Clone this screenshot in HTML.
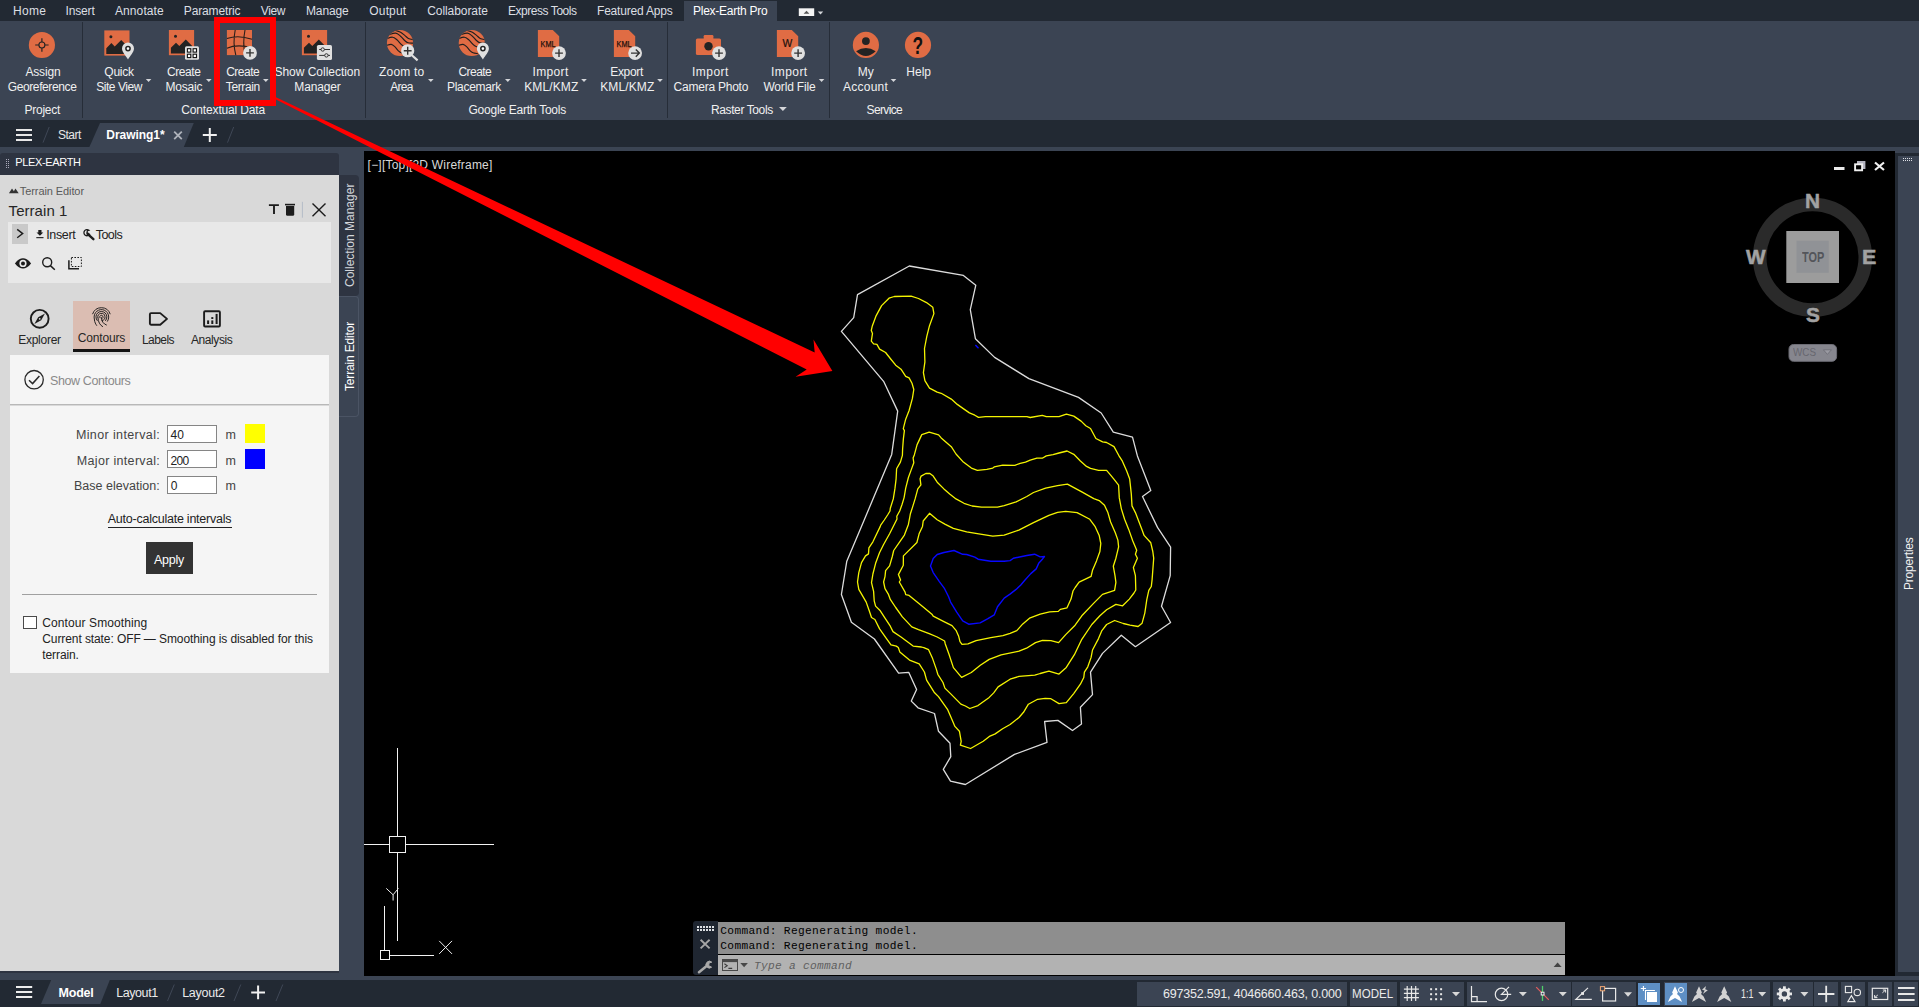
<!DOCTYPE html>
<html lang="en"><head><meta charset="utf-8"><title>Plex-Earth Terrain Editor - Drawing1</title>
<style>
*{box-sizing:border-box;margin:0;padding:0}
html,body{width:1919px;height:1007px;overflow:hidden;background:#3b4453;font-family:'Liberation Sans', sans-serif;}
.a{position:absolute}
.t{position:absolute;white-space:pre;line-height:20px;height:20px;font-family:'Liberation Sans', sans-serif;}
svg{position:absolute;overflow:visible}
#menubar{left:0;top:0;width:1919px;height:21px;background:#222933}
#acttab{left:684px;top:1px;width:93px;height:20px;background:#3b4453}
#ribbon{left:1px;top:21px;width:1918px;height:99px;background:#3b4453}
.rsep{position:absolute;top:22px;width:1px;height:96px;background:#262d38}
#ftabs{left:0;top:120px;width:1919px;height:27px;background:#222933}
#paltitle{left:0;top:153px;width:339px;height:22px;background:#2e3441;border-radius:3px 3px 0 0}
#palette{left:0;top:174.5px;width:339px;height:796.5px;background:#d9d9d9}
#viewport{left:364px;top:151px;width:1531px;height:825px;background:#000}
#statusbar{left:0;top:980px;width:1919px;height:27px;background:#222933}
.sbb{position:absolute;top:982px;height:24px;background:#3b4453}
</style></head><body>
<div id="menubar" class="a"></div><div id="acttab" class="a"></div>
<div id="ribbon" class="a"></div>
<div class="rsep" style="left:82px"></div><div class="rsep" style="left:365px"></div><div class="rsep" style="left:667px"></div><div class="rsep" style="left:829px"></div>
<div id="ftabs" class="a"></div>
<div id="paltitle" class="a"></div>
<div id="palette" class="a"></div>
<div id="viewport" class="a"></div>
<div id="statusbar" class="a"></div>

<svg id="ribbon-icons" class="a" style="left:0;top:0" width="1919" height="120" viewBox="0 0 1919 120"><circle cx="41.9" cy="45" r="13.1" fill="#e06c44"/><circle cx="41.9" cy="45" r="3" fill="none" stroke="#232323" stroke-width="1.1"/><path d="M35.2 45 H38.9 M44.9 45 H48.6 M41.9 38.3 V42 M41.9 48 V51.7" stroke="#232323" stroke-width="1.2"/><rect x="104.3" y="30.4" width="25.2" height="25.2" fill="#e06c44"/><circle cx="110.89999999999999" cy="36.699999999999996" r="1.5" fill="#232323"/><path d="M106.3 54.0 V48.2 L111.39999999999999 43.099999999999994 L114.7 46.4 L121.19999999999999 40.0 L127.6 46.4 V54.0 Z" fill="#232323"/><path d="M128 59.5 C125.8 55.800000000000004 122 52.2 122 48.6 A6 6 0 1 1 134 48.6 C134 52.2 130.2 55.800000000000004 128 59.5 Z" fill="#e0e0e0"/><circle cx="128" cy="48.6" r="2.1" fill="#fff" stroke="#232323" stroke-width="1.5"/><rect x="168.9" y="30" width="25.2" height="25.2" fill="#e06c44"/><circle cx="175.5" cy="36.3" r="1.5" fill="#232323"/><path d="M170.9 53.6 V47.8 L176.0 42.7 L179.3 46 L185.8 39.6 L192.20000000000002 46 V53.6 Z" fill="#232323"/><rect x="185" y="46.2" width="14" height="13.6" rx="1.5" fill="#e0e0e0"/><rect x="187.4" y="48.699999999999996" width="3.4" height="3.4" fill="#fff" stroke="#111" stroke-width="1.1"/><rect x="193.10000000000002" y="48.699999999999996" width="3.4" height="3.4" fill="#fff" stroke="#111" stroke-width="1.1"/><rect x="187.4" y="54.199999999999996" width="3.4" height="3.4" fill="#fff" stroke="#111" stroke-width="1.1"/><rect x="193.10000000000002" y="54.199999999999996" width="3.4" height="3.4" fill="#fff" stroke="#111" stroke-width="1.1"/><rect x="226.9" y="30" width="25.1" height="25.1" fill="#e06c44"/><path d="M235.2 30 C233.6 38 233.4 46 235.8 55.1 M245 30 C243.4 38 243.2 46 245 55.1 M226.9 38.6 C234 36 244 36.5 252 39.3 M226.9 48.2 C234 45.2 244 45.6 252 47.8" stroke="#2a1f1b" stroke-width="1.1" fill="none"/><circle cx="250" cy="52.9" r="6.9" fill="#e0e0e0"/><path d="M246.1 52.9 H253.9 M250 49.0 V56.8" stroke="#333" stroke-width="1.4" fill="none"/><rect x="301.9" y="30" width="25.2" height="25.2" fill="#e06c44"/><circle cx="308.5" cy="36.3" r="1.5" fill="#232323"/><path d="M303.9 53.6 V47.8 L309.0 42.7 L312.29999999999995 46 L318.79999999999995 39.6 L325.2 46 V53.6 Z" fill="#232323"/><rect x="316.9" y="45" width="15.1" height="15" rx="1.6" fill="#e0e0e0"/><path d="M319.2 49.5 H330 M319.2 55.4 H330" stroke="#333" stroke-width="1"/><circle cx="322.7" cy="49.5" r="1.7" fill="#e0e0e0" stroke="#333" stroke-width="1"/><circle cx="326.4" cy="55.4" r="1.7" fill="#e0e0e0" stroke="#333" stroke-width="1"/><clipPath id="g1"><circle cx="400" cy="43" r="13.1"/></clipPath><circle cx="400" cy="43" r="13.1" fill="#e06c44"/><g clip-path="url(#g1)"><path d="M394.00 30.00 C395.10 30.37 398.77 31.27 400.60 32.20 C402.43 33.13 403.70 34.57 405.00 35.60 C406.30 36.63 406.98 37.72 408.40 38.40 C409.82 39.08 412.65 39.48 413.50 39.70" stroke="#1f1f1f" stroke-width="1.15" fill="none"/><path d="M388.00 35.00 C389.27 34.68 393.50 32.89 395.60 33.10 C397.70 33.31 399.13 35.05 400.60 36.25 C402.07 37.45 403.15 39.21 404.40 40.30 C405.65 41.39 406.50 42.33 408.10 42.80 C409.70 43.27 413.02 43.05 414.00 43.10" stroke="#1f1f1f" stroke-width="1.15" fill="none"/><path d="M386.00 39.00 C387.08 38.70 390.68 37.08 392.50 37.20 C394.32 37.32 395.55 38.61 396.90 39.70 C398.25 40.79 399.46 42.66 400.60 43.75 C401.74 44.84 402.52 45.67 403.75 46.25 C404.98 46.83 406.46 47.14 408.00 47.20 C409.54 47.26 412.17 46.70 413.00 46.60" stroke="#1f1f1f" stroke-width="1.15" fill="none"/><path d="M386.00 45.60 C386.88 45.40 389.75 44.18 391.25 44.40 C392.75 44.62 393.86 45.87 395.00 46.90 C396.14 47.93 397.06 49.62 398.10 50.60 C399.14 51.58 399.93 52.30 401.25 52.80 C402.57 53.30 405.21 53.47 406.00 53.60" stroke="#1f1f1f" stroke-width="1.15" fill="none"/></g><path d="M411.6 55 L417.6 60.4" stroke="#e0e0e0" stroke-width="2.2"/><circle cx="407.7" cy="50.75" r="6.6" fill="#e0e0e0"/><path d="M403.8 50.75 H411.59999999999997 M407.7 46.85 V54.65" stroke="#333" stroke-width="1.4" fill="none"/><clipPath id="g2"><circle cx="471.8" cy="43" r="13.1"/></clipPath><circle cx="471.8" cy="43" r="13.1" fill="#e06c44"/><g clip-path="url(#g2)"><path d="M465.80 30.00 C466.90 30.37 470.57 31.27 472.40 32.20 C474.23 33.13 475.50 34.57 476.80 35.60 C478.10 36.63 478.78 37.72 480.20 38.40 C481.62 39.08 484.45 39.48 485.30 39.70" stroke="#1f1f1f" stroke-width="1.15" fill="none"/><path d="M459.80 35.00 C461.07 34.68 465.30 32.89 467.40 33.10 C469.50 33.31 470.93 35.05 472.40 36.25 C473.87 37.45 474.95 39.21 476.20 40.30 C477.45 41.39 478.30 42.33 479.90 42.80 C481.50 43.27 484.82 43.05 485.80 43.10" stroke="#1f1f1f" stroke-width="1.15" fill="none"/><path d="M457.80 39.00 C458.88 38.70 462.48 37.08 464.30 37.20 C466.12 37.32 467.35 38.61 468.70 39.70 C470.05 40.79 471.26 42.66 472.40 43.75 C473.54 44.84 474.32 45.67 475.55 46.25 C476.78 46.83 478.26 47.14 479.80 47.20 C481.34 47.26 483.97 46.70 484.80 46.60" stroke="#1f1f1f" stroke-width="1.15" fill="none"/><path d="M457.80 45.60 C458.68 45.40 461.55 44.18 463.05 44.40 C464.55 44.62 465.66 45.87 466.80 46.90 C467.94 47.93 468.86 49.62 469.90 50.60 C470.94 51.58 471.73 52.30 473.05 52.80 C474.37 53.30 477.01 53.47 477.80 53.60" stroke="#1f1f1f" stroke-width="1.15" fill="none"/></g><path d="M482.9 59.5 C480.7 55.800000000000004 476.9 52.2 476.9 48.6 A6 6 0 1 1 488.9 48.6 C488.9 52.2 485.09999999999997 55.800000000000004 482.9 59.5 Z" fill="#e0e0e0"/><circle cx="482.9" cy="48.6" r="2.1" fill="#fff" stroke="#232323" stroke-width="1.5"/><path d="M537.9 30 H552.8 L559.1999999999999 36.3 V57.1 H537.9 Z" fill="#e06c44"/><circle cx="559" cy="53.1" r="6.9" fill="#e0e0e0"/><path d="M555.1 53.1 H562.9 M559 49.2 V57.0" stroke="#333" stroke-width="1.4" fill="none"/><path d="M613.9 30 H628.8 L635.1999999999999 36.3 V57.1 H613.9 Z" fill="#e06c44"/><circle cx="635.1" cy="53.1" r="6.9" fill="#e0e0e0"/><path d="M631 53.1 H639.2 M635.8 49.4 L639.4 53.1 L635.8 56.8" stroke="#333" stroke-width="1.4" fill="none"/><rect x="695.9" y="38.5" width="25.1" height="16.6" rx="1.6" fill="#e06c44"/><path d="M703.7 39 V36.2 Q703.7 35 704.9 35 H712.2 Q713.4 35 713.4 36.2 V39 Z" fill="#e06c44"/><circle cx="708.5" cy="46.2" r="4.2" fill="#232323"/><circle cx="719" cy="53.1" r="6.9" fill="#e0e0e0"/><path d="M715.1 53.1 H722.9 M719 49.2 V57.0" stroke="#333" stroke-width="1.4" fill="none"/><path d="M776.9 30 H791.8 L798.1999999999999 36.3 V57.1 H776.9 Z" fill="#e06c44"/><circle cx="798.1" cy="53.1" r="6.9" fill="#e0e0e0"/><path d="M794.2 53.1 H802.0 M798.1 49.2 V57.0" stroke="#333" stroke-width="1.4" fill="none"/><circle cx="865.9" cy="44.9" r="13.1" fill="#e06c44"/><circle cx="865.9" cy="41.1" r="3.9" fill="#232323"/><path d="M856.1 51.3 Q865.9 44.8 875.7 51.3 Q865.9 60.8 856.1 51.3 Z" fill="#232323"/><circle cx="918" cy="44.9" r="13.1" fill="#e06c44"/><path d="M145.8 79 h5.6 l-2.8 3 z" fill="#d4d6da"/><path d="M206 79 h5.6 l-2.8 3 z" fill="#d4d6da"/><path d="M263 79 h5.6 l-2.8 3 z" fill="#d4d6da"/><path d="M428 79 h5.6 l-2.8 3 z" fill="#d4d6da"/><path d="M505 79 h5.6 l-2.8 3 z" fill="#d4d6da"/><path d="M581.2 79 h5.6 l-2.8 3 z" fill="#d4d6da"/><path d="M657.2 79 h5.6 l-2.8 3 z" fill="#d4d6da"/><path d="M818.8 79 h5.6 l-2.8 3 z" fill="#d4d6da"/><path d="M890.7 79 h5.6 l-2.8 3 z" fill="#d4d6da"/><path d="M779 107 h7.8 l-3.9 4 z" fill="#d4d6da"/><rect x="798.8" y="8.3" width="15.4" height="7.7" fill="#f4f4f4"/><path d="M803.6 13.8 l2.9 -3 l2.9 3 z" fill="#555"/><path d="M817.8 11.4 h5.4 l-2.7 3 z" fill="#d4d6da"/><text x="540.6" y="46.8" font-family="Liberation Sans, sans-serif" font-size="8.4" fill="#1c100c" stroke="#1c100c" stroke-width="0.25" textLength="15" lengthAdjust="spacingAndGlyphs">KML</text><text x="616.6" y="46.8" font-family="Liberation Sans, sans-serif" font-size="8.4" fill="#1c100c" stroke="#1c100c" stroke-width="0.25" textLength="15" lengthAdjust="spacingAndGlyphs">KML</text><text x="782.6" y="46.9" font-family="Liberation Sans, sans-serif" font-size="10.4" fill="#1c100c" stroke="#1c100c" stroke-width="0.2" textLength="9.8" lengthAdjust="spacingAndGlyphs">W</text><text x="912.6" y="54" font-family="Liberation Sans, sans-serif" font-size="24.4" font-weight="700" fill="#111" textLength="10.6" lengthAdjust="spacingAndGlyphs">?</text></svg>
<svg id="filetab-icons" class="a" style="left:0;top:0" width="400" height="150" viewBox="0 0 400 150"><path d="M89.4 147 L100 123 H193.8 L183.8 147 Z" fill="#3b4453"/><path d="M16 130 H32 M16 135 H32 M16 140 H32" stroke="#e8e8e8" stroke-width="2"/><path d="M43 142.6 L49.2 127" stroke="#3f4756" stroke-width="1"/><path d="M227.5 142.6 L233.7 127" stroke="#3f4756" stroke-width="1"/><path d="M174.2 131.6 L181.8 139.2 M181.8 131.6 L174.2 139.2" stroke="#aeb2ba" stroke-width="1.8"/><path d="M202.8 135 H216.8 M209.8 128 V142" stroke="#f0f0f0" stroke-width="2"/></svg>

<div class="a" id="toolbar-panel" style="left:8px;top:222px;width:323px;height:61px;background:#e8e8e8"></div>
<div class="a" id="chev-btn" style="left:12px;top:224px;width:16px;height:19.5px;background:#c9c9c9"></div>
<div class="a" id="tab-contours" style="left:73.2px;top:301px;width:56.5px;height:51.4px;background:#dbbdb2;border-bottom:3.5px solid #141414"></div>
<div class="a" id="card-show" style="left:10px;top:355px;width:319px;height:49.5px;background:#f5f5f5;border-bottom:1px solid #b8b8b8"></div>
<div class="a" id="card-settings" style="left:10px;top:405.5px;width:319px;height:267.5px;background:#f5f5f5"></div>
<div class="a inp" style="left:167px;top:425.3px;width:50px;height:17.4px;background:#fff;border:1px solid #858585"></div>
<div class="a inp" style="left:167px;top:450.4px;width:50px;height:17.4px;background:#fff;border:1px solid #858585"></div>
<div class="a inp" style="left:167px;top:476.3px;width:50px;height:17.4px;background:#fff;border:1px solid #858585"></div>
<div class="a" id="sw-minor" style="left:244.8px;top:423.6px;width:20.2px;height:19.6px;background:#ffff00"></div>
<div class="a" id="sw-major" style="left:244.8px;top:449.2px;width:20.2px;height:19.8px;background:#0000ff"></div>
<div class="a" id="auto-ul" style="left:107.5px;top:527px;width:124px;height:1px;background:#222"></div>
<div class="a" id="apply-btn" style="left:146px;top:542px;width:47px;height:31.8px;background:#333333"></div>
<div class="a" id="hr1" style="left:22px;top:594px;width:295px;height:1px;background:#a0a0a0"></div>
<div class="a" id="cb-smooth" style="left:23px;top:616.4px;width:14px;height:12.8px;background:#fff;border:1px solid #4a4a4a"></div>
<div class="a" id="side-cm" style="left:339px;top:175px;width:19.6px;height:121px;background:#2e3441;border-radius:0 4px 4px 0"></div>
<div class="a" id="side-te" style="left:339px;top:296px;width:19.6px;height:121px;background:#3b4453;border:1px solid #4b5464;border-left:none;border-radius:0 4px 4px 0"></div>
<div class="a" style="left:339px;top:153px;width:25px;height:22px;background:#3b4453"></div>

<svg id="palette-icons" class="a" style="left:0;top:0" width="364" height="700" viewBox="0 0 364 700"><rect x="6" y="159" width="1" height="1" fill="#aab"/><rect x="8" y="159" width="1" height="1" fill="#aab"/><rect x="6" y="161" width="1" height="1" fill="#aab"/><rect x="8" y="161" width="1" height="1" fill="#aab"/><rect x="6" y="163" width="1" height="1" fill="#aab"/><rect x="8" y="163" width="1" height="1" fill="#aab"/><rect x="6" y="165" width="1" height="1" fill="#aab"/><rect x="8" y="165" width="1" height="1" fill="#aab"/><rect x="6" y="167" width="1" height="1" fill="#aab"/><rect x="8" y="167" width="1" height="1" fill="#aab"/><path d="M8.9 193.2 L12 188.6 L13.9 191.2 L15.4 188.6 L18.7 193.2 Z" fill="#333"/><path d="M268.9 205.1 H278.9 M274 205 V213.9" stroke="#1c1c1c" stroke-width="1.9" fill="none"/><rect x="285" y="203.8" width="10" height="1.6" fill="#1c1c1c"/><path d="M286 206 H294.2 V214.4 Q294.2 215.8 292.8 215.8 H287.4 Q286 215.8 286 214.4 Z" fill="#1c1c1c"/><path d="M302.4 201.8 V217.7" stroke="#b5bcc8" stroke-width="1"/><path d="M312.5 203.4 L325.5 216.2 M325.5 203.4 L312.5 216.2" stroke="#1c1c1c" stroke-width="1.4"/><path d="M17.2 229.4 L22.7 233.6 L17.2 237.8" stroke="#1c1c1c" stroke-width="1.4" fill="none"/><path d="M38.3 230.1 H41.5 V232.6 H43.3 L39.9 235.8 L36.5 232.6 H38.3 Z" fill="#1c1c1c"/><rect x="36.3" y="237.1" width="7.2" height="1.1" fill="#1c1c1c"/><path d="M87.5 233.8 L93.4 239.2" stroke="#1c1c1c" stroke-width="2.4" stroke-linecap="round"/><path d="M88.9 230.2 A3.1 3.1 0 1 0 89.6 234.4 L87 232.6 L87.4 230.6 Z" fill="none" stroke="#1c1c1c" stroke-width="1.3"/><path d="M14.9 263.4 Q23 253.2 31.1 263.4 Q23 273.6 14.9 263.4 Z" fill="#1c1c1c"/><circle cx="23" cy="263.4" r="3.6" fill="#e8e8e8"/><circle cx="23" cy="263.4" r="2" fill="#1c1c1c"/><circle cx="47.2" cy="262.3" r="4.5" fill="none" stroke="#1c1c1c" stroke-width="1.4"/><path d="M50.4 265.6 L54.8 269.7" stroke="#1c1c1c" stroke-width="1.5"/><path d="M68.9 260.2 V268.8 H79" stroke="#1c1c1c" stroke-width="1.5" fill="none"/><rect x="71.4" y="257.5" width="10" height="9" fill="none" stroke="#1c1c1c" stroke-width="1" stroke-dasharray="1.6 1.4"/><circle cx="39.7" cy="318.8" r="8.9" fill="none" stroke="#1c1c1c" stroke-width="1.9"/><path d="M45 313.6 L41.2 320.3 L34.4 324 L38.2 317.3 Z" fill="#1c1c1c"/><circle cx="39.7" cy="318.8" r="0.9" fill="#d9d9d9"/><path d="M99.93 317.85 A1.7 1.7 0 1 1 102.25 318.47 M97.85 317.63 A3.6 3.6 0 1 1 102.03 320.55 M97.19 320.54 A5.5 5.5 0 1 1 105.61 320.54 M94.45 319.53 A7.4 7.4 0 1 1 107.46 321.24 M92.66 313.82 A9.3 9.3 0 0 1 110.14 313.82" fill="none" stroke="#1c1c1c" stroke-width="0.95" stroke-linecap="round"/><path d="M101.4 317.6 C101.6 321.5 103.5 324 106.4 325 M98 318 C98.2 322 99.8 325 102.6 326.6 M94.4 320 C94.8 322.4 95.6 324 96.6 325.4" fill="none" stroke="#1c1c1c" stroke-width="0.95" stroke-linecap="round"/><path d="M151 313.1 H160.2 L167 318.9 L160.2 324.7 H151 Q149.9 324.7 149.9 323.6 V314.2 Q149.9 313.1 151 313.1 Z" fill="none" stroke="#1c1c1c" stroke-width="1.9" stroke-linejoin="round"/><rect x="204.1" y="311.3" width="15.8" height="15.2" rx="1" fill="none" stroke="#1c1c1c" stroke-width="1.9"/><rect x="207.1" y="320.4" width="2" height="3.6" fill="#1c1c1c"/><rect x="211.3" y="320.4" width="2" height="3.6" fill="#1c1c1c"/><rect x="211.3" y="317.1" width="2" height="1.9" fill="#1c1c1c"/><rect x="215.6" y="313.9" width="2" height="10.1" fill="#1c1c1c"/><circle cx="34.1" cy="379.7" r="9.2" fill="none" stroke="#2a2a2a" stroke-width="1.3"/><path d="M29 380.3 L32.6 383.6 L39.4 375.9" fill="none" stroke="#2a2a2a" stroke-width="1.5"/></svg>
<div class="a" style="left:340px;top:286.6px;width:0;height:0;transform-origin:0 0;transform:rotate(-90deg)"><span class="t" style="left:0.00px;top:-0.20px;font-size:12px;color:#d3d6db;letter-spacing:0.000px">Collection Manager</span></div>
<div class="a" style="left:340px;top:391.2px;width:0;height:0;transform-origin:0 0;transform:rotate(-90deg)"><span class="t" style="left:0.00px;top:-0.10px;font-size:12px;color:#ffffff;letter-spacing:-0.167px">Terrain Editor</span></div>
<svg id="viewport-gfx" class="a" style="left:0;top:0" width="1919" height="1007" viewBox="0 0 1919 1007"><g id="terrain"><path d="M909.3 266.0 L963.4 275.4 L975.8 285.2 L970.3 309.6 L975.4 338.7 L994.6 357.4 L1028.9 378.6 L1078.5 397.4 L1101.2 413.0 L1113.3 432.2 L1132.5 437.2 L1137.4 455.9 L1150.8 490.5 L1142.5 496.5 L1157.5 527.4 L1170.6 547.2 L1170.2 575.6 L1161.5 606.2 L1170.6 622.5 L1135.4 646.7 L1121.3 635.3 L1102.5 653.4 L1090.5 672.1 L1092.5 694.6 L1080.4 707.2 L1081.5 724.0 L1072.5 730.5 L1057.9 720.4 L1044.6 721.5 L1047.0 742.4 L1014.5 754.4 L965.4 784.5 L950.5 781.1 L943.3 769.3 L950.8 756.7 L950.0 743.3 L938.5 731.3 L934.5 713.5 L918.0 707.8 L911.3 701.1 L916.6 689.5 L908.7 672.3 L898.6 673.1 L874.4 639.0 L851.4 622.2 L841.4 594.5 L846.8 561.2 L864.2 520.0 L891.7 454.4 L897.7 411.1 L883.6 381.3 L841.4 331.4 L853.7 317.6 L857.5 294.6 Z" fill="none" stroke="#dcdcdc" stroke-width="1.3" stroke-linejoin="round"/><path d="M889.0 298.2 L894.3 296.5 L911.1 296.2 L918.5 298.5 L926.5 302.6 L932.8 307.3 L933.9 313.6 L929.5 325.7 L926.8 336.4 L924.5 348.5 L924.9 361.9 L923.4 372.6 L924.9 380.6 L929.5 388.2 L937.2 392.2 L941.2 393.3 L951.3 399.1 L957.3 404.4 L964.0 409.1 L969.4 412.9 L974.8 415.2 L978.5 417.4 L985.5 416.6 L1026.9 416.7 L1030.2 417.5 L1042.3 415.3 L1046.3 416.7 L1059.0 416.7 L1066.4 414.1 L1073.8 416.1 L1081.1 421.1 L1085.8 425.8 L1090.5 428.5 L1095.9 438.5 L1102.6 441.9 L1106.6 442.5 L1114.0 446.6 L1118.7 455.3 L1122.4 461.2 L1126.7 471.1 L1129.7 479.1 L1131.3 493.9 L1132.0 505.9 L1135.4 512.6 L1142.1 530.1 L1144.1 535.4 L1150.8 542.8 L1152.8 551.5 L1153.7 558.2 L1152.8 570.3 L1152.1 579.6 L1151.3 586.5 L1148.8 590.4 L1146.8 599.7 L1144.8 613.1 L1142.1 623.2 L1138.1 626.5 L1130.0 625.2 L1123.3 623.5 L1114.6 620.5 L1106.6 624.5 L1101.9 630.6 L1098.5 638.6 L1092.5 650.0 L1091.1 657.4 L1087.8 666.8 L1084.4 672.1 L1083.8 677.5 L1080.4 684.2 L1073.7 693.6 L1066.3 702.7 L1059.0 703.6 L1050.9 698.7 L1045.1 698.4 L1037.6 699.3 L1028.4 704.2 L1023.5 712.3 L1019.0 717.5 L1010.1 724.5 L1002.6 728.7 L995.2 733.9 L990.0 736.1 L983.2 741.3 L970.6 748.5 L960.4 745.1 L961.2 741.3 L959.4 731.2 L954.9 726.4 L952.7 721.2 L947.5 709.3 L938.5 696.6 L934.1 692.2 L926.6 680.2 L924.4 672.0 L919.2 663.8 L909.5 660.1 L899.8 651.9 L898.3 647.5 L896.3 646.1 L891.0 644.9 L886.3 638.3 L879.6 628.9 L874.9 619.5 L871.5 617.5 L869.5 611.5 L866.2 602.1 L858.8 589.4 L857.5 582.0 L858.8 572.6 L861.5 562.6 L865.5 555.9 L868.5 553.9 L868.9 547.8 L872.9 541.8 L880.3 526.4 L880.7 525.1 L884.3 520.0 L887.6 515.0 L890.0 511.0 L890.3 508.3 L893.3 498.9 L895.0 488.2 L896.1 478.8 L896.6 468.8 L900.4 462.1 L902.4 455.4 L902.6 449.3 L903.4 438.6 L904.4 430.6 L903.3 428.6 L905.7 419.2 L909.1 410.5 L912.4 398.4 L913.8 389.5 L912.0 383.3 L909.1 377.9 L905.7 376.3 L901.0 369.2 L895.7 365.2 L890.3 358.5 L885.6 352.5 L879.6 349.1 L876.9 344.4 L873.6 343.8 L871.3 341.1 L872.5 333.4 L871.3 330.4 L872.2 326.3 L876.2 315.6 L881.6 305.6 Z" fill="none" stroke="#f4f400" stroke-width="1.3" stroke-linejoin="round"/><path d="M921.8 434.6 L929.2 432.2 L938.6 434.9 L941.2 437.9 L951.3 446.7 L956.0 454.0 L962.7 461.4 L971.4 468.1 L977.4 470.4 L986.8 469.4 L992.8 468.1 L994.2 466.9 L1002.7 465.1 L1014.8 465.3 L1020.2 463.3 L1025.5 462.2 L1030.2 460.2 L1036.9 458.2 L1042.3 458.2 L1046.3 455.9 L1053.0 454.6 L1059.0 453.0 L1067.1 451.0 L1073.8 454.3 L1080.4 461.0 L1086.5 466.4 L1090.5 468.4 L1098.6 470.3 L1106.6 470.3 L1110.0 474.4 L1113.9 479.1 L1118.6 485.2 L1119.3 497.9 L1121.3 508.6 L1124.6 519.3 L1128.7 529.4 L1132.7 540.8 L1136.7 550.2 L1135.4 554.2 L1137.4 558.2 L1133.4 567.6 L1135.4 575.6 L1135.8 590.0 L1134.0 593.0 L1129.3 599.1 L1122.6 605.8 L1115.9 604.4 L1106.6 609.8 L1099.9 615.8 L1091.8 624.5 L1081.8 639.3 L1074.4 654.7 L1066.3 667.4 L1059.0 674.1 L1048.9 671.2 L1040.2 673.5 L1034.8 675.1 L1019.0 676.4 L1010.1 679.2 L998.1 686.9 L993.7 692.9 L989.2 697.4 L978.0 705.6 L969.8 708.5 L965.4 706.0 L960.9 704.1 L950.5 693.6 L944.9 688.1 L943.0 682.5 L937.8 674.3 L936.3 669.1 L932.6 658.6 L928.6 649.7 L923.8 647.7 L921.4 647.0 L913.1 646.1 L906.4 641.0 L901.0 637.0 L893.0 631.6 L890.3 626.2 L885.0 618.2 L880.3 610.8 L875.6 606.1 L874.2 600.8 L873.6 591.4 L871.5 582.7 L872.9 574.0 L875.6 563.3 L879.6 552.5 L883.6 544.5 L889.6 533.8 L897.0 519.0 L896.8 516.3 L899.7 511.0 L902.1 504.3 L904.1 497.6 L905.7 488.2 L908.4 477.5 L911.1 470.1 L913.8 462.7 L913.1 458.0 L914.4 454.7 L917.1 444.6 Z" fill="none" stroke="#f4f400" stroke-width="1.3" stroke-linejoin="round"/><path d="M921.1 476.1 L925.8 473.5 L929.9 473.5 L933.2 476.1 L937.2 482.2 L943.9 488.9 L950.0 494.2 L956.0 498.9 L964.0 503.3 L972.1 506.0 L981.5 507.2 L997.5 507.2 L1004.2 505.6 L1016.1 501.9 L1026.8 496.5 L1033.5 492.5 L1045.6 488.1 L1057.6 485.6 L1067.4 484.1 L1081.8 491.9 L1093.8 498.6 L1099.2 500.6 L1104.5 505.3 L1107.9 512.6 L1110.6 522.0 L1115.3 532.7 L1117.9 540.1 L1118.6 546.8 L1115.9 558.2 L1113.3 566.2 L1115.0 575.6 L1115.9 582.3 L1114.6 590.4 L1102.5 594.4 L1093.8 603.1 L1081.8 615.8 L1075.1 625.2 L1065.7 634.6 L1058.6 642.6 L1050.9 640.6 L1042.5 640.4 L1035.5 642.6 L1026.5 648.2 L1019.0 651.2 L1001.1 654.9 L989.2 659.4 L980.3 665.3 L971.3 672.5 L961.6 677.3 L953.4 667.6 L949.0 654.2 L945.2 643.7 L944.6 641.0 L937.2 637.0 L929.2 633.6 L918.5 629.6 L911.8 626.9 L902.4 616.9 L895.7 607.5 L890.3 599.4 L888.3 594.1 L885.0 588.7 L883.6 582.0 L885.0 576.7 L885.6 570.6 L889.6 565.9 L892.3 556.5 L893.7 550.5 L899.7 541.8 L904.4 535.1 L908.4 524.4 L909.8 517.0 L910.4 513.7 L912.4 507.6 L915.1 498.9 L917.8 488.9 L920.9 484.9 L920.1 478.8 Z" fill="none" stroke="#f4f400" stroke-width="1.3" stroke-linejoin="round"/><path d="M929.5 513.3 L937.2 519.7 L945.3 524.4 L953.3 528.4 L966.7 531.8 L978.8 533.8 L992.8 536.2 L1004.2 535.1 L1018.8 530.1 L1033.5 522.7 L1048.9 515.3 L1057.6 512.4 L1065.7 511.3 L1077.1 512.6 L1089.8 519.3 L1095.2 526.7 L1099.2 535.4 L1100.8 543.5 L1099.9 551.5 L1096.5 560.9 L1092.5 570.3 L1091.1 576.3 L1079.1 582.1 L1075.2 587.5 L1073.0 591.0 L1071.0 599.1 L1067.0 607.8 L1060.3 609.4 L1058.3 611.4 L1049.6 611.8 L1040.2 614.2 L1029.5 618.2 L1022.8 623.9 L1016.8 630.6 L1010.1 633.3 L1002.9 635.6 L990.8 637.6 L976.1 640.7 L968.0 643.9 L962.0 644.3 L960.0 641.7 L958.7 636.3 L956.0 630.3 L952.0 625.6 L943.9 621.6 L933.2 616.2 L931.9 614.2 L923.8 607.5 L917.1 602.1 L909.1 595.4 L905.7 594.7 L905.1 592.1 L899.3 582.0 L900.6 580.0 L898.4 574.6 L903.3 565.3 L903.4 555.9 L916.9 542.5 L919.1 533.8 L922.5 526.4 L923.2 521.0 Z" fill="none" stroke="#f4f400" stroke-width="1.3" stroke-linejoin="round"/><path d="M930.5 565.9 L933.2 558.6 L937.2 554.5 L943.9 552.5 L954.0 550.5 L962.7 554.3 L966.7 554.5 L974.8 557.2 L978.1 559.2 L990.8 561.2 L1004.2 561.2 L1010.1 560.6 L1013.4 558.2 L1026.8 555.5 L1034.6 554.2 L1040.2 556.9 L1044.5 556.5 L1042.6 558.9 L1038.9 562.9 L1036.2 568.9 L1030.8 573.6 L1024.8 580.3 L1020.8 585.0 L1016.1 589.4 L1010.0 594.1 L1004.2 598.1 L997.5 606.8 L994.2 614.9 L987.5 618.9 L980.1 622.9 L968.7 624.2 L962.7 620.9 L956.7 612.2 L950.6 602.1 L948.6 596.8 L944.6 588.7 L939.2 581.3 L933.2 572.6 Z" fill="none" stroke="#0808ff" stroke-width="1.4" stroke-linejoin="round"/><path d="M975.4 345.1 L978.5 348.2" stroke="#0606ff" stroke-width="1.4"/></g><g id="crosshair" stroke="#f2f2f2" stroke-width="1" fill="none" shape-rendering="crispEdges"><path d="M397.5 748 V836 M397.5 852 V941 M364 844.5 H389 M405 844.5 H494"/><rect x="389.5" y="836.5" width="16" height="16"/></g><g id="ucs" stroke="#f2f2f2" stroke-width="1" fill="none"><path d="M384.5 906 V950.5 M389.5 955.5 H433.5" shape-rendering="crispEdges"/><rect x="380.5" y="950.5" width="9" height="9" shape-rendering="crispEdges"/><path d="M386.3 888.4 L393.1 894.8 L398.4 888.4 M393.1 894.8 V900.5 M439.2 940.9 L452 953.9 M452 940.9 L439.2 953.9"/></g><g id="winctl"><rect x="1834" y="167" width="10.5" height="3" fill="#eaeaea"/><rect x="1857" y="161" width="8.4" height="8" fill="#b4b4c0"/><rect x="1855.1" y="164.3" width="7" height="6" fill="#000" stroke="#f0f0f0" stroke-width="1.9"/><path d="M1875 162.5 L1884 170 M1884 162.5 L1875 170" stroke="#f0f0f0" stroke-width="2.2"/></g><g id="viewcube"><circle cx="1812.5" cy="257.3" r="52.8" fill="none" stroke="#2a2a2a" stroke-width="13.6"/><rect x="1786.3" y="231" width="52.7" height="52" fill="#9c9c9c"/><rect x="1796.5" y="240.8" width="32.2" height="32" fill="#909296"/><rect x="1789" y="344.5" width="47.6" height="16.8" rx="4.5" fill="#86868e" stroke="#6c6c74" stroke-width="1"/><path d="M1823.4 349.8 h8 l-4 4.6 z" fill="#9a9aa2" stroke="#6a6a72" stroke-width="0.8"/></g></svg>

<div class="a" id="cmd-handle" style="left:693px;top:921px;width:25px;height:54px;background:#1f2631;border-radius:3px 0 0 3px"></div>
<div class="a" id="cmd-history" style="left:718px;top:921.5px;width:847px;height:32.5px;background:#8e8e8e"></div>
<div class="a" id="cmd-input" style="left:718px;top:955px;width:847px;height:20px;background:#b2b2b2"></div>

<svg id="cmd-icons" class="a" style="left:0;top:0" width="1919" height="1007" viewBox="0 0 1919 1007"><rect x="697" y="926" width="2" height="2" fill="#dcdfe3" shape-rendering="crispEdges"/><rect x="697" y="929" width="2" height="2" fill="#dcdfe3" shape-rendering="crispEdges"/><rect x="700" y="926" width="2" height="2" fill="#dcdfe3" shape-rendering="crispEdges"/><rect x="700" y="929" width="2" height="2" fill="#dcdfe3" shape-rendering="crispEdges"/><rect x="703" y="926" width="2" height="2" fill="#dcdfe3" shape-rendering="crispEdges"/><rect x="703" y="929" width="2" height="2" fill="#dcdfe3" shape-rendering="crispEdges"/><rect x="706" y="926" width="2" height="2" fill="#dcdfe3" shape-rendering="crispEdges"/><rect x="706" y="929" width="2" height="2" fill="#dcdfe3" shape-rendering="crispEdges"/><rect x="709" y="926" width="2" height="2" fill="#dcdfe3" shape-rendering="crispEdges"/><rect x="709" y="929" width="2" height="2" fill="#dcdfe3" shape-rendering="crispEdges"/><rect x="712" y="926" width="2" height="2" fill="#dcdfe3" shape-rendering="crispEdges"/><rect x="712" y="929" width="2" height="2" fill="#dcdfe3" shape-rendering="crispEdges"/><path d="M700.6 939.8 L709.6 948.4 M709.6 939.8 L700.6 948.4" stroke="#a6a6a6" stroke-width="1.9"/><path d="M699 972.2 L707.2 965.6" stroke="#a9a9a9" stroke-width="2.6" stroke-linecap="round"/><path d="M711.8 962.2 A3.4 3.4 0 1 0 711.6 967.2 L708.6 965.6 L709.2 962.8 Z" fill="#a9a9a9" stroke="#a9a9a9" stroke-width="1"/><rect x="722.5" y="959.5" width="15" height="11" fill="none" stroke="#484848" stroke-width="1"/><rect x="722.5" y="959.5" width="15" height="2.6" fill="#484848"/><path d="M724.4 963.8 l2.8 1.9 l-2.8 1.9 M728.4 968.4 h3.8" stroke="#3a3a3a" stroke-width="1.1" fill="none"/><path d="M740.3 963 h7.6 l-3.8 4.3 z" fill="#484848"/><path d="M1553.6 967 h8 l-4 -4.4 z" fill="#444"/></svg>

<div class="a" id="right-strip" style="left:1895px;top:153px;width:24px;height:3px;background:#222933"></div>
<div class="a" style="left:1895px;top:153px;width:3px;height:823px;background:#222933"></div>
<div class="a" id="props-bar" style="left:1898px;top:156px;width:21px;height:816px;background:#3b4453"></div>
<div class="a" style="left:1898px;top:972px;width:21px;height:4px;background:#222933"></div>
<div class="a" id="pal-bottom" style="left:0;top:971px;width:339px;height:2px;background:#2e3441"></div>

<div class="a" style="left:1894.5px;top:589.8px;width:0;height:0;transform-origin:0 0;transform:rotate(-90deg)"><span class="t" style="left:0.00px;top:3.50px;font-size:12px;color:#f0f0f0;letter-spacing:-0.210px">Properties</span></div>
<div class="sbb" style="left:1137px;width:210px;top:982px;height:24px"></div>
<div class="sbb" style="left:1350px;width:47px;top:982px;height:24px"></div>
<div class="sbb" style="left:1400px;width:64px;top:982px;height:24px"></div>
<div class="sbb" style="left:1467px;width:104px;top:982px;height:24px"></div>
<div class="sbb" style="left:1572.2px;width:63.799999999999955px;top:982px;height:24px"></div>
<div class="sbb" style="left:1664px;width:106.20000000000005px;top:982px;height:24px"></div>
<div class="sbb" style="left:1773px;width:65px;top:982px;height:24px"></div>
<div class="sbb" style="left:1841px;width:24px;top:982px;height:24px"></div>
<div class="sbb" style="left:1868px;width:24px;top:982px;height:24px"></div>
<div class="sbb" style="left:1894px;width:24px;top:982px;height:24px"></div>
<div class="sbb" style="left:1637.9px;width:22.3px;top:983px;height:22px;background:#5e8fc4"></div>
<div class="sbb" style="left:1664.9px;width:22.2px;top:983px;height:22px;background:#5e8fc4"></div>
<div class="a" style="left:1813px;top:982px;width:1px;height:24px;background:#222933"></div>
<svg id="status-icons" class="a" style="left:0;top:0" width="1919" height="1007" viewBox="0 0 1919 1007"><path d="M41 1004 L51.2 980 H109.8 L100.3 1004 Z" fill="#3b4453"/><path d="M16 987.1 H32.2 M16 992 H32.2 M16 997 H32.2" stroke="#ececec" stroke-width="2"/><path d="M167.5 1001 L174.3 984.5" stroke="#3f4756" stroke-width="1"/><path d="M234 1001 L240.8 984.5" stroke="#3f4756" stroke-width="1"/><path d="M276 1001 L282.8 984.5" stroke="#3f4756" stroke-width="1"/><path d="M251.2 992.4 H265 M258.1 985.6 V999.2" stroke="#f0f0f0" stroke-width="2"/><path d="M1407.2 985.9 V1000.9 M1411.5 985.9 V1000.9 M1415.7 985.9 V1000.9 M1403.9 989.2 H1418.9 M1403.9 993.4 H1418.9 M1403.9 997.6 H1418.9 " stroke="#e8e8e8" stroke-width="1.2" fill="none"/><rect x="1430.1" y="988.2" width="2" height="2" fill="#e8e8e8"/><rect x="1430.1" y="993.2" width="2" height="2" fill="#e8e8e8"/><rect x="1430.1" y="998.2" width="2" height="2" fill="#e8e8e8"/><rect x="1435.1" y="988.2" width="2" height="2" fill="#e8e8e8"/><rect x="1435.1" y="993.2" width="2" height="2" fill="#e8e8e8"/><rect x="1435.1" y="998.2" width="2" height="2" fill="#e8e8e8"/><rect x="1440.1" y="988.2" width="2" height="2" fill="#e8e8e8"/><rect x="1440.1" y="993.2" width="2" height="2" fill="#e8e8e8"/><rect x="1440.1" y="998.2" width="2" height="2" fill="#e8e8e8"/><path d="M1452 991.9 h8 l-4 4.4 z" fill="#d8d8d8"/><path d="M1471.5 985.9 V1001.6 H1487 M1471.5 996.7 H1477.1 V1001.6" stroke="#e8e8e8" stroke-width="1.2" fill="none"/><circle cx="1501.5" cy="994.4" r="6.2" fill="none" stroke="#e8e8e8" stroke-width="1.2"/><path d="M1511.2 994.4 H1501.5 L1509 986.8" stroke="#e8e8e8" stroke-width="1.2" fill="none"/><path d="M1518.9 991.9 h8 l-4 4.4 z" fill="#d8d8d8"/><path d="M1536.2 987.1 L1548.8 999.8" stroke="#e25d5d" stroke-width="1.2"/><path d="M1542.5 985.9 V1000.9" stroke="#4fd06a" stroke-width="1.3"/><rect x="1541.2" y="992.2" width="2.8" height="2.8" fill="#3b4453" stroke="#fff" stroke-width="0.9"/><path d="M1558.8 991.9 h8 l-4 4.4 z" fill="#d8d8d8"/><path d="M1591.8 999.4 H1575.9 L1588 987.9" stroke="#e8e8e8" stroke-width="1.2" fill="none"/><rect x="1581.2" y="992.1" width="2.8" height="2.8" fill="#e8e8e8"/><rect x="1602.6" y="988.4" width="13" height="12.6" fill="none" stroke="#e8e8e8" stroke-width="1.2"/><rect x="1600.4" y="986.6" width="4.2" height="4.2" fill="#3b4453" stroke="#f0a673" stroke-width="1"/><path d="M1624 992.3 h8 l-4 4.4 z" fill="#d8d8d8"/><path d="M1640.8 988.5 H1646 M1643.4 985.9 V991.1" stroke="#fff" stroke-width="1.1"/><path d="M1645.5 999.9 V990.5 H1654.9" stroke="#fff" stroke-width="1.1" fill="none"/><rect x="1647" y="992" width="10" height="10" fill="#fff"/><path d="M1675.0 986.2 L1677.9 992.4 L1677.0 994 L1679.6 996.6 L1682.1 1002 L1675.0 997.9 L1667.9 1002 L1670.4 996.6 L1673.0 994 L1672.1 992.4 Z" fill="#fff"/><circle cx="1681" cy="990" r="2.5" fill="none" stroke="#fff" stroke-width="1"/><path d="M1699.0 986.2 L1701.9 992.4 L1701.0 994 L1703.6 996.6 L1706.1 1002 L1699.0 997.9 L1691.9 1002 L1694.4 996.6 L1697.0 994 L1696.1 992.4 Z" fill="#d2d2d2"/><path d="M1706 985.9 L1702 989.8 L1704.7 990.5 L1702.8 994.1 L1707.8 990.2 L1705.2 989.3 Z" fill="#d2d2d2"/><path d="M1724.2 986.2 L1727.1 992.4 L1726.2 994 L1728.8 996.6 L1731.3 1002 L1724.2 997.9 L1717.1 1002 L1719.6 996.6 L1722.2 994 L1721.3 992.4 Z" fill="#d2d2d2"/><path d="M1758.2 992 h8 l-4 4.4 z" fill="#d8d8d8"/><circle cx="1784.4" cy="993.9" r="4.2" fill="none" stroke="#e8e8e8" stroke-width="3"/><rect x="1783.0" y="986.3" width="2.8" height="3.4" fill="#e8e8e8" transform="rotate(0 1784.4 993.9)"/><rect x="1783.0" y="986.3" width="2.8" height="3.4" fill="#e8e8e8" transform="rotate(45 1784.4 993.9)"/><rect x="1783.0" y="986.3" width="2.8" height="3.4" fill="#e8e8e8" transform="rotate(90 1784.4 993.9)"/><rect x="1783.0" y="986.3" width="2.8" height="3.4" fill="#e8e8e8" transform="rotate(135 1784.4 993.9)"/><rect x="1783.0" y="986.3" width="2.8" height="3.4" fill="#e8e8e8" transform="rotate(180 1784.4 993.9)"/><rect x="1783.0" y="986.3" width="2.8" height="3.4" fill="#e8e8e8" transform="rotate(225 1784.4 993.9)"/><rect x="1783.0" y="986.3" width="2.8" height="3.4" fill="#e8e8e8" transform="rotate(270 1784.4 993.9)"/><rect x="1783.0" y="986.3" width="2.8" height="3.4" fill="#e8e8e8" transform="rotate(315 1784.4 993.9)"/><path d="M1800.4 992 h8 l-4 4.4 z" fill="#d8d8d8"/><path d="M1818 994 H1834.4 M1826.2 985.8 V1002.2" stroke="#e8e8e8" stroke-width="1.8"/><rect x="1845.4" y="986.4" width="6.2" height="6.2" fill="none" stroke="#e8e8e8" stroke-width="1.1"/><circle cx="1857.3" cy="992.4" r="3.2" fill="none" stroke="#e8e8e8" stroke-width="1.1"/><path d="M1851.4 995.6 L1855 1001.6 H1847.8 Z" fill="none" stroke="#e8e8e8" stroke-width="1.1"/><rect x="1872.3" y="988.3" width="15.4" height="11.2" fill="none" stroke="#e8e8e8" stroke-width="1.2"/><path d="M1882.4 992.8 L1885.6 990 M1882.8 990 H1885.6 V992.6 M1877.8 995 L1874.6 997.6 M1877.4 997.6 H1874.6 V995" stroke="#e8e8e8" stroke-width="1" fill="none"/><path d="M1898 988 H1914.6 M1898 994 H1914.6 M1898 1000 H1914.6" stroke="#e8e8e8" stroke-width="1.8"/><rect x="1903" y="158" width="1" height="1" fill="#e0e3e8" shape-rendering="crispEdges"/><rect x="1903" y="160" width="1" height="1" fill="#e0e3e8" shape-rendering="crispEdges"/><rect x="1905" y="158" width="1" height="1" fill="#e0e3e8" shape-rendering="crispEdges"/><rect x="1905" y="160" width="1" height="1" fill="#e0e3e8" shape-rendering="crispEdges"/><rect x="1907" y="158" width="1" height="1" fill="#e0e3e8" shape-rendering="crispEdges"/><rect x="1907" y="160" width="1" height="1" fill="#e0e3e8" shape-rendering="crispEdges"/><rect x="1909" y="158" width="1" height="1" fill="#e0e3e8" shape-rendering="crispEdges"/><rect x="1909" y="160" width="1" height="1" fill="#e0e3e8" shape-rendering="crispEdges"/><rect x="1911" y="158" width="1" height="1" fill="#e0e3e8" shape-rendering="crispEdges"/><rect x="1911" y="160" width="1" height="1" fill="#e0e3e8" shape-rendering="crispEdges"/></svg>
<span class="t" style="left:13.00px;top:1.00px;font-size:12px;color:#dcdfe3;letter-spacing:0.288px;">Home</span>
<span class="t" style="left:65.60px;top:1.00px;font-size:12px;color:#dcdfe3;letter-spacing:-0.176px;">Insert</span>
<span class="t" style="left:115.00px;top:1.00px;font-size:12px;color:#dcdfe3;letter-spacing:0.090px;">Annotate</span>
<span class="t" style="left:183.80px;top:1.00px;font-size:12px;color:#dcdfe3;letter-spacing:-0.146px;">Parametric</span>
<span class="t" style="left:260.80px;top:1.00px;font-size:12px;color:#dcdfe3;letter-spacing:-0.376px;">View</span>
<span class="t" style="left:306.00px;top:1.00px;font-size:12px;color:#dcdfe3;letter-spacing:-0.138px;">Manage</span>
<span class="t" style="left:369.30px;top:1.00px;font-size:12px;color:#dcdfe3;letter-spacing:0.162px;">Output</span>
<span class="t" style="left:427.20px;top:1.00px;font-size:12px;color:#dcdfe3;letter-spacing:-0.070px;">Collaborate</span>
<span class="t" style="left:507.90px;top:1.00px;font-size:12px;color:#dcdfe3;letter-spacing:-0.441px;">Express Tools</span>
<span class="t" style="left:597.00px;top:1.00px;font-size:12px;color:#dcdfe3;letter-spacing:-0.201px;">Featured Apps</span>
<span class="t" style="left:693.00px;top:1.00px;font-size:12px;color:#ffffff;letter-spacing:-0.258px;">Plex-Earth Pro</span>
<span class="t" style="left:25.40px;top:62.00px;font-size:12px;color:#f0f0f0;letter-spacing:-0.149px;">Assign</span>
<span class="t" style="left:7.70px;top:77.00px;font-size:12px;color:#f0f0f0;letter-spacing:-0.382px;">Georeference</span>
<span class="t" style="left:24.50px;top:100.00px;font-size:12px;color:#f0f0f0;letter-spacing:-0.252px;">Project</span>
<span class="t" style="left:104.30px;top:62.00px;font-size:12px;color:#f0f0f0;letter-spacing:-0.243px;">Quick</span>
<span class="t" style="left:96.20px;top:77.00px;font-size:12px;color:#f0f0f0;letter-spacing:-0.442px;">Site View</span>
<span class="t" style="left:167.00px;top:62.00px;font-size:12px;color:#f0f0f0;letter-spacing:-0.409px;">Create</span>
<span class="t" style="left:165.50px;top:77.00px;font-size:12px;color:#f0f0f0;letter-spacing:-0.202px;">Mosaic</span>
<span class="t" style="left:226.20px;top:62.00px;font-size:12px;color:#f0f0f0;letter-spacing:-0.509px;">Create</span>
<span class="t" style="left:225.80px;top:77.00px;font-size:12px;color:#f0f0f0;letter-spacing:-0.384px;">Terrain</span>
<span class="t" style="left:274.50px;top:62.00px;font-size:12px;color:#f0f0f0;letter-spacing:-0.027px;">Show Collection</span>
<span class="t" style="left:294.30px;top:77.00px;font-size:12px;color:#f0f0f0;letter-spacing:-0.144px;">Manager</span>
<span class="t" style="left:181.30px;top:100.00px;font-size:12px;color:#f0f0f0;letter-spacing:-0.155px;">Contextual Data</span>
<span class="t" style="left:379.00px;top:62.00px;font-size:12px;color:#f0f0f0;letter-spacing:0.193px;">Zoom to</span>
<span class="t" style="left:390.20px;top:77.00px;font-size:12px;color:#f0f0f0;letter-spacing:-0.691px;">Area</span>
<span class="t" style="left:458.50px;top:62.00px;font-size:12px;color:#f0f0f0;letter-spacing:-0.569px;">Create</span>
<span class="t" style="left:447.00px;top:77.00px;font-size:12px;color:#f0f0f0;letter-spacing:-0.298px;">Placemark</span>
<span class="t" style="left:532.50px;top:62.00px;font-size:12px;color:#f0f0f0;letter-spacing:0.345px;">Import</span>
<span class="t" style="left:524.20px;top:77.00px;font-size:12px;color:#f0f0f0;letter-spacing:0.132px;">KML/KMZ</span>
<span class="t" style="left:610.20px;top:62.00px;font-size:12px;color:#f0f0f0;letter-spacing:-0.310px;">Export</span>
<span class="t" style="left:600.20px;top:77.00px;font-size:12px;color:#f0f0f0;letter-spacing:0.132px;">KML/KMZ</span>
<span class="t" style="left:468.50px;top:100.00px;font-size:12px;color:#f0f0f0;letter-spacing:-0.245px;">Google Earth Tools</span>
<span class="t" style="left:692.00px;top:62.00px;font-size:12px;color:#f0f0f0;letter-spacing:0.465px;">Import</span>
<span class="t" style="left:673.60px;top:77.00px;font-size:12px;color:#f0f0f0;letter-spacing:-0.236px;">Camera Photo</span>
<span class="t" style="left:771.00px;top:62.00px;font-size:12px;color:#f0f0f0;letter-spacing:0.425px;">Import</span>
<span class="t" style="left:763.40px;top:77.00px;font-size:12px;color:#f0f0f0;letter-spacing:-0.168px;">World File</span>
<span class="t" style="left:711.00px;top:100.00px;font-size:12px;color:#f0f0f0;letter-spacing:-0.390px;">Raster Tools</span>
<span class="t" style="left:857.80px;top:62.00px;font-size:12px;color:#f0f0f0;letter-spacing:0.004px;">My</span>
<span class="t" style="left:843.00px;top:77.00px;font-size:12px;color:#f0f0f0;letter-spacing:0.246px;">Account</span>
<span class="t" style="left:906.30px;top:62.00px;font-size:12px;color:#f0f0f0;letter-spacing:-0.002px;">Help</span>
<span class="t" style="left:866.60px;top:100.00px;font-size:12px;color:#f0f0f0;letter-spacing:-0.657px;">Service</span>
<span class="t" style="left:58.00px;top:125.00px;font-size:12px;color:#e6e6e6;letter-spacing:-0.502px;">Start</span>
<span class="t" style="left:106.30px;top:125.00px;font-size:12px;color:#ffffff;letter-spacing:-0.039px;font-weight:700;">Drawing1*</span>
<span class="t" style="left:15.30px;top:152.00px;font-size:11px;color:#ffffff;letter-spacing:-0.359px;">PLEX-EARTH</span>
<span class="t" style="left:19.80px;top:181.00px;font-size:11px;color:#5a5a5a;letter-spacing:-0.089px;">Terrain Editor</span>
<span class="t" style="left:8.60px;top:200.50px;font-size:15px;color:#262626;letter-spacing:0.048px;">Terrain 1</span>
<span class="t" style="left:46.20px;top:225.00px;font-size:12.5px;color:#222;letter-spacing:-0.358px;">Insert</span>
<span class="t" style="left:95.70px;top:225.00px;font-size:12.5px;color:#222;letter-spacing:-0.533px;">Tools</span>
<span class="t" style="left:18.20px;top:330.00px;font-size:12px;color:#262626;letter-spacing:-0.255px;">Explorer</span>
<span class="t" style="left:77.80px;top:328.00px;font-size:12px;color:#262626;letter-spacing:-0.184px;">Contours</span>
<span class="t" style="left:142.00px;top:330.00px;font-size:12px;color:#262626;letter-spacing:-0.552px;">Labels</span>
<span class="t" style="left:191.00px;top:330.00px;font-size:12px;color:#262626;letter-spacing:-0.412px;">Analysis</span>
<span class="t" style="left:50.00px;top:371.00px;font-size:12.5px;color:#8a8a8a;letter-spacing:-0.384px;">Show Contours</span>
<span class="t" style="left:75.90px;top:425.00px;font-size:12.5px;color:#444;letter-spacing:0.384px;">Minor interval:</span>
<span class="t" style="left:76.80px;top:451.00px;font-size:12.5px;color:#444;letter-spacing:0.320px;">Major interval:</span>
<span class="t" style="left:73.90px;top:476.00px;font-size:12.5px;color:#444;letter-spacing:0.029px;">Base elevation:</span>
<span class="t" style="left:170.50px;top:425.00px;font-size:12px;color:#222;letter-spacing:0.126px;">40</span>
<span class="t" style="left:170.50px;top:451.00px;font-size:12px;color:#222;letter-spacing:-0.674px;">200</span>
<span class="t" style="left:170.80px;top:476.00px;font-size:12px;color:#222;letter-spacing:0.000px;">0</span>
<span class="t" style="left:225.50px;top:425.00px;font-size:12.5px;color:#444;letter-spacing:0.000px;">m</span>
<span class="t" style="left:225.50px;top:451.00px;font-size:12.5px;color:#444;letter-spacing:0.000px;">m</span>
<span class="t" style="left:225.50px;top:476.00px;font-size:12.5px;color:#444;letter-spacing:0.000px;">m</span>
<span class="t" style="left:107.70px;top:509.00px;font-size:12.5px;color:#222;letter-spacing:-0.234px;">Auto-calculate intervals</span>
<span class="t" style="left:154.00px;top:549.50px;font-size:12.5px;color:#ffffff;letter-spacing:-0.280px;">Apply</span>
<span class="t" style="left:42.30px;top:613.00px;font-size:12px;color:#222;letter-spacing:0.099px;">Contour Smoothing</span>
<span class="t" style="left:42.30px;top:629.00px;font-size:12px;color:#222;letter-spacing:-0.095px;">Current state: OFF — Smoothing is disabled for this</span>
<span class="t" style="left:42.30px;top:645.00px;font-size:12px;color:#222;letter-spacing:-0.102px;">terrain.</span>
<span class="t" style="left:367.60px;top:155.00px;font-size:12px;color:#d8d8d8;letter-spacing:0.208px;">[−][Top][2D Wireframe]</span>
<span class="t" style="left:1802.00px;top:247.30px;font-size:14px;color:#53555a;letter-spacing:0.000px;font-weight:700;transform-origin:0.00px 50%;transform:scaleX(0.7805);">TOP</span>
<span class="t" style="left:1805.00px;top:191.10px;font-size:20.5px;color:#a2a2a2;letter-spacing:0.000px;font-weight:700;-webkit-text-stroke:0.5px #a2a2a2;transform-origin:1.00px 50%;transform:scaleX(1.0154);">N</span>
<span class="t" style="left:1806.00px;top:304.50px;font-size:20.5px;color:#a2a2a2;letter-spacing:0.000px;font-weight:700;-webkit-text-stroke:0.5px #a2a2a2;transform-origin:0.00px 50%;transform:scaleX(1.0154);">S</span>
<span class="t" style="left:1746.00px;top:247.10px;font-size:20.5px;color:#a2a2a2;letter-spacing:0.000px;font-weight:700;-webkit-text-stroke:0.5px #a2a2a2;transform-origin:0.00px 50%;transform:scaleX(1.0150);">W</span>
<span class="t" style="left:1862.30px;top:247.10px;font-size:20.5px;color:#a2a2a2;letter-spacing:0.000px;font-weight:700;-webkit-text-stroke:0.5px #a2a2a2;transform-origin:1.00px 50%;transform:scaleX(1.0500);">E</span>
<span class="t" style="left:1793.40px;top:341.70px;font-size:11.5px;color:#66666e;letter-spacing:0.000px;transform-origin:0.00px 50%;transform:scaleX(0.8616);">WCS</span>
<span class="t" style="left:720.30px;top:921.00px;font-size:11.2px;color:#000000;letter-spacing:0.346px;font-family:'Liberation Mono', monospace;">Command: Regenerating model.</span>
<span class="t" style="left:720.30px;top:936.00px;font-size:11.2px;color:#000000;letter-spacing:0.346px;font-family:'Liberation Mono', monospace;">Command: Regenerating model.</span>
<span class="t" style="left:754.00px;top:956.00px;font-size:11.2px;color:#5f5f5f;letter-spacing:0.279px;font-style:italic;font-family:'Liberation Mono', monospace;">Type a command</span>
<span class="t" style="left:58.60px;top:983.00px;font-size:12.5px;color:#ffffff;letter-spacing:-0.234px;font-weight:700;">Model</span>
<span class="t" style="left:116.20px;top:983.00px;font-size:12.5px;color:#ebebeb;letter-spacing:-0.422px;">Layout1</span>
<span class="t" style="left:182.20px;top:983.00px;font-size:12.5px;color:#ebebeb;letter-spacing:-0.272px;">Layout2</span>
<span class="t" style="left:1162.90px;top:984.00px;font-size:12.5px;color:#ebebeb;letter-spacing:-0.185px;">697352.591, 4046660.463, 0.000</span>
<span class="t" style="left:1352.30px;top:984.00px;font-size:12.5px;color:#ebebeb;letter-spacing:0.000px;transform-origin:1.00px 50%;transform:scaleX(0.9218);">MODEL</span>
<span class="t" style="left:1741.20px;top:984.00px;font-size:12.5px;color:#ebebeb;letter-spacing:0.000px;transform-origin:0.00px 50%;transform:scaleX(0.7116);">1:1</span>
<svg id="annotation" class="a" style="left:0;top:0" width="1919" height="1007" viewBox="0 0 1919 1007"><rect x="217" y="20" width="56" height="83" fill="none" stroke="#ff0000" stroke-width="6"/><path d="M276 97.2 L814.7 352.6 L813.5 339.4 L832.4 371 L795.6 376.7 L806.7 369.5 L276 99.4 Z" fill="#ff0000"/></svg>
</body></html>
